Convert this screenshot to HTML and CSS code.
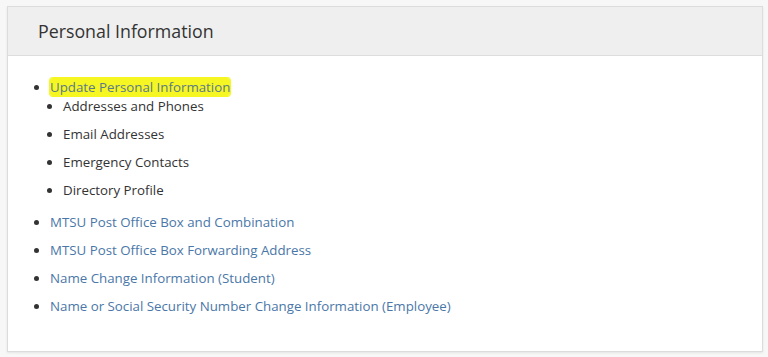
FILE: index.html
```html
<!DOCTYPE html>
<html lang="en">
  <head>
    <meta charset="UTF-8" />
    <meta name="viewport" content="width=device-width, initial-scale=1.0" />
    <title>Personal Information</title>
    <link rel="stylesheet" href="styles.css">
  </head>
  <body>
    <div class="panel">
      <div class="panel-heading">
        <h2>Personal Information</h2>
      </div>
      <div class="panel-body">
        <ul class="menu">
          <li>
            <a href="#" class="highlight">Update Personal Information</a>
            <ul class="submenu">
              <li>Addresses and Phones</li>
              <li>Email Addresses</li>
              <li>Emergency Contacts</li>
              <li>Directory Profile</li>
            </ul>
          </li>
          <li><a href="#">MTSU Post Office Box and Combination</a></li>
          <li><a href="#">MTSU Post Office Box Forwarding Address</a></li>
          <li><a href="#">Name Change Information (Student)</a></li>
          <li><a href="#">Name or Social Security Number Change Information (Employee)</a></li>
        </ul>
      </div>
    </div>
  </body>
</html>
```

FILE: styles.css
```css
body {
  font-family: "Open Sans", Arial, sans-serif;
  background-color: #f7f7f7;
  margin: 0;
  padding: 6px 5px 6px 7px;
}

.panel {
  background-color: #ffffff;
  border: 1px solid #dcdcdc;
  box-shadow: 0 1px 2px rgba(0, 0, 0, 0.08);
  height: 346px;
  box-sizing: border-box;
}

.panel-heading {
  background-color: #efefef;
  border-bottom: 1px solid #dddddd;
  height: 48px;
  display: flex;
  align-items: center;
  padding-left: 30px;
}

.panel-heading h2 {
  margin: 0;
  font-size: 17.8px;
  font-weight: normal;
  color: #333333;
}

.panel-body {
  padding-top: 21px;
}

.menu {
  margin: 0;
  padding-left: 42px;
  font-size: 13.3px;
  line-height: 20px;
}

.menu li {
  margin-bottom: 8px;
  color: #333333;
}

.menu a {
  color: #4a77a8;
  text-decoration: none;
}

.menu a.highlight {
  background-color: #f6f623;
  box-shadow: 0 0 0 1px #f6f623;
  color: #5a7a8a;
  border-radius: 3px;
}

.submenu {
  list-style-type: disc;
  padding-left: 13px;
  margin: -1px 0 12px 0;
}
```
